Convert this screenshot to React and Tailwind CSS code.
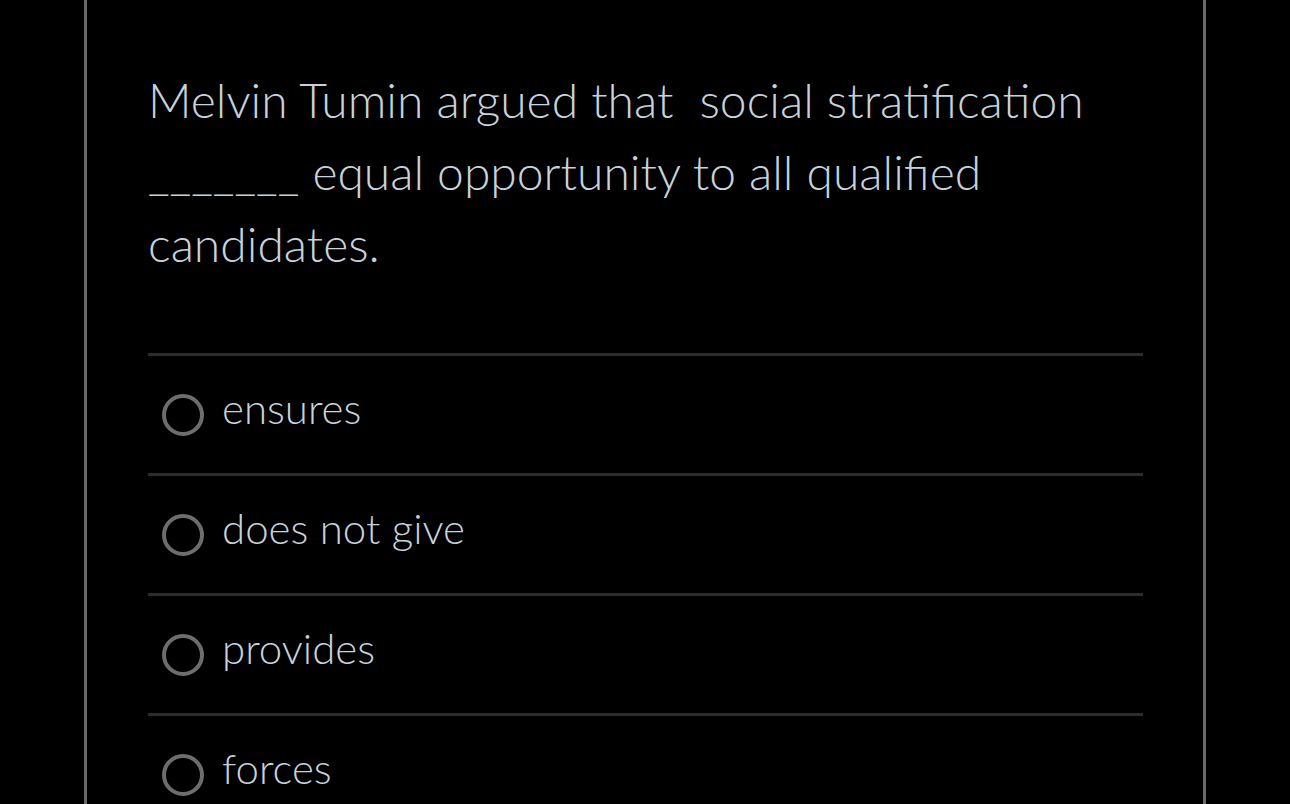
import React from "react";

const options = ["ensures", "does not give", "provides", "forces"];

export default function App() {
  return (
    <div className="w-[1290px] h-[804px] bg-black overflow-hidden" style={{ fontFamily: "'Lato Light', Lato, 'Open Sans', sans-serif" }}>
      <div className="ml-[84px] w-[1122px] h-full border-x-[3px] border-[#6a6a6a] pl-[61px] pr-[60px] pt-[64px]">
        <p className="text-[48px] leading-[72px] font-light text-[#c6d2dc] whitespace-pre-wrap">
          {"Melvin Tumin argued that  social stratification _______ equal opportunity to all qualified candidates."}
        </p>
        <div className="mt-[73px]">
          {options.map((o) => (
            <div key={o} className="border-t-[3px] border-[#2d2d2d] h-[120px] flex items-center pl-[14px]">
              <div className="w-[42px] h-[42px] rounded-full border-[4px] border-[#6d6d70] shrink-0" />
              <span className="ml-[18px] mb-[14px] text-[42px] font-light text-[#c6d2dc] leading-none">{o}</span>
            </div>
          ))}
        </div>
      </div>
    </div>
  );
}
